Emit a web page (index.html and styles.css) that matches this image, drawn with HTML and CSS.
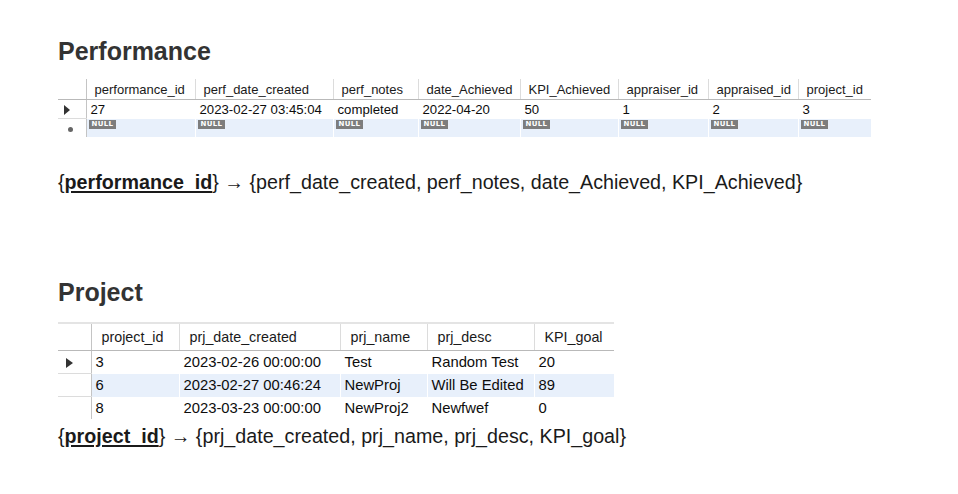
FILE: index.html
```html
<!DOCTYPE html>
<html>
<head>
<meta charset="utf-8">
<link rel="stylesheet" href="styles.css">
</head>
<body>
<div class="page">
  <h2 class="title t1">Performance</h2>
  <table class="grid perf">
    <colgroup>
      <col style="width:28px"><col style="width:109px"><col style="width:138px"><col style="width:85px"><col style="width:102px"><col style="width:98px"><col style="width:90px"><col style="width:90px"><col style="width:73px">
    </colgroup>
    <thead>
      <tr>
        <th class="rh"></th>
        <th>performance_id</th><th>perf_date_created</th><th>perf_notes</th><th>date_Achieved</th><th>KPI_Achieved</th><th>appraiser_id</th><th>appraised_id</th><th>project_id</th>
      </tr>
    </thead>
    <tbody>
      <tr>
        <td class="rh"><span class="arrow"></span></td>
        <td>27</td><td>2023-02-27 03:45:04</td><td>completed</td><td>2022-04-20</td><td>50</td><td>1</td><td>2</td><td>3</td>
      </tr>
      <tr class="alt nullrow">
        <td class="rh"><span class="dot"></span></td>
        <td><span class="null">NULL</span></td><td><span class="null">NULL</span></td><td><span class="null">NULL</span></td><td><span class="null">NULL</span></td><td><span class="null">NULL</span></td><td><span class="null">NULL</span></td><td><span class="null">NULL</span></td><td><span class="null">NULL</span></td>
      </tr>
    </tbody>
  </table>
  <p class="fd fd1">{<b>performance_id</b>} → {perf_date_created, perf_notes, date_Achieved, KPI_Achieved}</p>

  <h2 class="title t2">Project</h2>
  <table class="grid proj">
    <colgroup>
      <col style="width:33px"><col style="width:88px"><col style="width:161px"><col style="width:87px"><col style="width:107px"><col style="width:80px">
    </colgroup>
    <thead>
      <tr>
        <th class="rh"></th>
        <th>project_id</th><th>prj_date_created</th><th>prj_name</th><th>prj_desc</th><th>KPI_goal</th>
      </tr>
    </thead>
    <tbody>
      <tr>
        <td class="rh"><span class="arrow"></span></td>
        <td>3</td><td>2023-02-26 00:00:00</td><td>Test</td><td>Random Test</td><td>20</td>
      </tr>
      <tr class="alt">
        <td class="rh"></td>
        <td>6</td><td>2023-02-27 00:46:24</td><td>NewProj</td><td>Will Be Edited</td><td>89</td>
      </tr>
      <tr>
        <td class="rh last"></td>
        <td>8</td><td>2023-03-23 00:00:00</td><td>NewProj2</td><td>Newfwef</td><td>0</td>
      </tr>
    </tbody>
  </table>
  <p class="fd fd2">{<b>project_id</b>} → {prj_date_created, prj_name, prj_desc, KPI_goal}</p>
</div>
</body>
</html>
```
FILE: styles.css
```css
html, body {
  margin: 0;
  padding: 0;
  background: #ffffff;
}
.page {
  padding-left: 58px;
  font-family: "Liberation Sans", Arial, sans-serif;
}
.title {
  margin: 0;
  font-size: 25px;
  line-height: 30px;
  font-weight: bold;
  color: #333333;
}
.t1 { margin-top: 36px; }
.t2 { margin-top: 83px; }

.grid {
  border-collapse: collapse;
  table-layout: fixed;
  font-family: "Liberation Sans", Tahoma, sans-serif;
  color: #0d0d0d;
}
.grid th, .grid td {
  padding: 0;
  text-align: left;
  white-space: nowrap;
  overflow: hidden;
  font-weight: normal;
}
.grid th {
  color: #1a1a1a;
  border-right: 1px solid #dcdcdc;
  border-bottom: 1px solid #b9b9b9;
}
.grid td {
  border-right: 1px solid #ffffff;
}
.grid .rh {
  border-right: 1px solid #c4c4c4;
  position: relative;
}
.grid th:last-child { border-right: none; }
.grid td:last-child { border-right: none; }
.grid tr.alt td { background: #e8f0fb; }
.grid tr.alt td.rh { background: #ffffff; }

.perf { margin-top: 13px; }
.perf th {
  height: 20px;
  font-size: 13px;
  padding-left: 8px;
}
.perf td {
  height: 18px;
  font-size: 13.2px;
  padding-left: 4px;
}
.perf tbody tr:first-child td.rh { border-bottom: 1px solid #dcdcdc; }
.perf .nullrow td {
  vertical-align: top;
  padding-left: 2px;
  padding-top: 1px;
  height: 17px;
}
.perf .nullrow td.rh { padding-left: 0; }

.null {
  display: inline-block;
  background: #7d7d7d;
  color: #ffffff;
  font-family: "DejaVu Sans", sans-serif;
  font-size: 7px;
  font-weight: bold;
  line-height: 9px;
  height: 9px;
  padding: 0 3px;
  letter-spacing: 0.3px;
  vertical-align: top;
}

.arrow {
  position: absolute;
  width: 0;
  height: 0;
  border-left: 6px solid #333333;
  border-top: 5px solid transparent;
  border-bottom: 5px solid transparent;
}
.perf .arrow { left: 6px; top: 5px; }
.proj .arrow { left: 8px; top: 7px; border-left-width: 7px; border-top-width: 5px; border-bottom-width: 5px; }
.dot {
  position: absolute;
  left: 10px;
  top: 8px;
  width: 5px;
  height: 5px;
  border-radius: 50%;
  background: #666666;
}

.proj {
  margin-top: 15px;
  border-top: 2px solid #e4e4e4;
}
.proj th {
  height: 26px;
  font-size: 14.3px;
  padding-left: 10px;
}
.proj td {
  height: 22px;
  font-size: 14.8px;
  padding-left: 4px;
}
.proj td.rh { border-bottom: 1px solid #dcdcdc; }
.proj td.rh.last { border-bottom: none; }

.fd {
  margin: 0;
  font-size: 19.7px;
  line-height: 23px;
  color: #1a1a1a;
}
.fd b {
  text-decoration: underline;
  text-decoration-thickness: 2px;
  text-underline-offset: 2px;
}
.fd1 { margin-top: 34px; }
.fd2 { margin-top: 6px; }
```
